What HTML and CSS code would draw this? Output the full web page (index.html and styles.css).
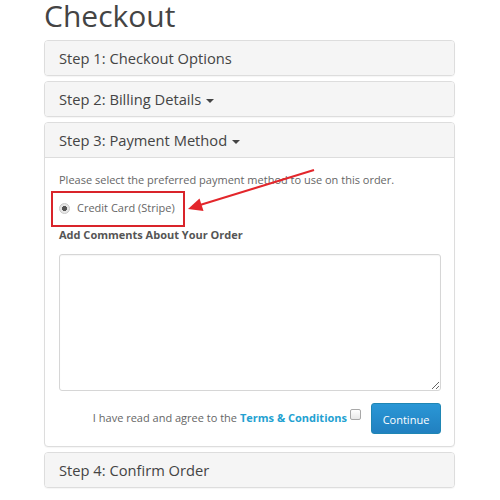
FILE: index.html
```html
<!DOCTYPE html>
<html>
<head>
<meta charset="utf-8">
<link rel="stylesheet" href="styles.css">
</head>
<body>
<div class="page">
  <h1 class="title">Checkout</h1>
  <div class="panel">
    <div class="panel-heading">Step 1: Checkout Options</div>
  </div>
  <div class="panel">
    <div class="panel-heading">Step 2: Billing Details <span class="caret"></span></div>
  </div>
  <div class="panel">
    <div class="panel-heading open">Step 3: Payment Method <span class="caret"></span></div>
    <div class="panel-body">
      <p class="intro">Please select the preferred payment method to use on this order.</p>
      <label class="method"><span class="radio"></span>Credit Card (Stripe)</label>
      <p class="comments-label">Add Comments About Your Order</p>
      <textarea class="comments"></textarea>
      <div class="agree-row">
        <span class="agree-text">I have read and agree to the <a class="terms">Terms &amp; Conditions</a></span>
        <input type="checkbox" class="check">
        <button class="btn">Continue</button>
      </div>
    </div>
  </div>
  <div class="panel">
    <div class="panel-heading">Step 4: Confirm Order</div>
  </div>
  <svg class="arrow" width="500" height="500" viewBox="0 0 500 500">
    <line x1="314" y1="170" x2="200" y2="205" stroke="#e3262b" stroke-width="2"/>
    <polygon points="188,209 203.5,211 199.5,198.5" fill="#e3262b"/>
  </svg>
</div>
</body>
</html>
```

FILE: styles.css
```css
html, body {
  margin: 0;
  padding: 0;
  background: #fff;
}
body {
  font-family: "Open Sans", "Liberation Sans", sans-serif;
  color: #666;
}
.page {
  position: relative;
  width: 411px;
  padding-left: 44px;
  padding-top: 1px;
}
.title {
  margin: 0 0 9px;
  font-size: 30px;
  line-height: 30px;
  font-weight: 400;
  color: #444;
}
.panel {
  border: 1px solid #ddd;
  border-radius: 4px;
  margin-bottom: 5px;
  background: #fff;
  box-shadow: 0 1px 1px rgba(0,0,0,0.04);
}
.panel-heading {
  background: #f5f5f5;
  padding: 7px 14px;
  line-height: 20px;
  font-size: 14.7px;
  color: #444;
  border-radius: 3px;
}
.panel-heading.open {
  border-bottom: 1px solid #ddd;
  border-radius: 3px 3px 0 0;
}
.caret {
  display: inline-block;
  width: 0;
  height: 0;
  border-top: 4px solid #444;
  border-left: 4px solid transparent;
  border-right: 4px solid transparent;
  vertical-align: middle;
  margin-left: 1px;
}
.panel-body {
  padding: 14px 13px 12px 14px;
  font-size: 11px;
  line-height: 16px;
}
.intro {
  margin: 0 0 3px;
}
.method {
  display: inline-flex;
  align-items: center;
  margin-left: -8px;
  padding: 7px 8px 9px 6px;
  border: 2px solid #d9242a;
  color: #666;
}
.radio {
  width: 9px;
  height: 9px;
  border-radius: 50%;
  border: 1px solid #c8c8c8;
  background: radial-gradient(circle, #555 0 2.3px, #e6e6e6 2.8px);
  margin-right: 7px;
  margin-top: 1px;
}
.comments-label {
  margin: 0 0 11px;
  font-weight: 700;
  color: #555;
}
.comments {
  display: block;
  box-sizing: border-box;
  width: 382px;
  height: 137px;
  margin: 0;
  border: 1px solid #d6d6d6;
  border-radius: 3px;
  background: #fff;
  box-shadow: inset 0 1px 1px rgba(0,0,0,0.04);
}
.agree-row {
  display: flex;
  justify-content: flex-end;
  align-items: flex-start;
  margin-top: 12px;
}
.agree-text {
  margin-top: 7px;
  color: #666;
}
.terms {
  color: #23a1d1;
  font-weight: 700;
}
.check {
  appearance: none;
  -webkit-appearance: none;
  box-sizing: border-box;
  width: 11px;
  height: 11px;
  margin: 6px 10px 0 3px;
  border: 1px solid #a8a8a8;
  border-radius: 2px;
  background: linear-gradient(#fff, #e8e8e8);
}
.btn {
  box-sizing: border-box;
  height: 31px;
  width: 70px;
  padding: 0;
  border: 1px solid #1f86b4;
  border-radius: 3px;
  background: linear-gradient(#2a97d6, #2180c0);
  color: #fff;
  font-family: "Open Sans", "Liberation Sans", sans-serif;
  font-size: 11px;
  line-height: 16px;
  padding-top: 2px;
}
.arrow {
  position: absolute;
  left: 0;
  top: 0;
  pointer-events: none;
}
```
